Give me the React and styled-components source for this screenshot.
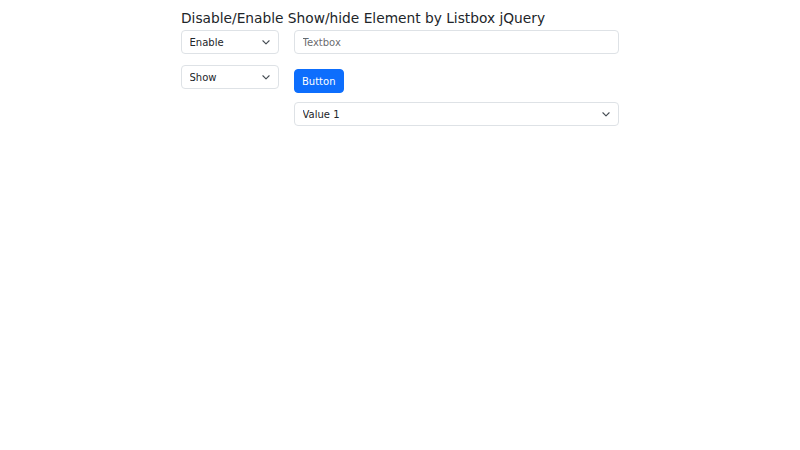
import React, { useState } from 'react';
import styled, { createGlobalStyle } from 'styled-components';

const GlobalStyle = createGlobalStyle`
  body {
    margin: 0;
    background: #fff;
    color: #212529;
    font-family: 'DejaVu Sans', sans-serif;
    font-size: 10px;
    line-height: 1.5;
  }
  * {
    box-sizing: border-box;
  }
`;

const Page = styled.div`
  width: 438px;
  margin: 0 auto;
  padding-top: 10px;
`;

const Title = styled.h4`
  margin: 0 0 3.5px;
  font-size: 13.75px;
  font-weight: 400;
  line-height: 16.5px;
`;

const Row = styled.div`
  display: grid;
  grid-template-columns: 98px 1fr;
  column-gap: 15px;
  align-items: start;
`;

const Column = styled.div`
  display: flex;
  flex-direction: column;
  align-items: flex-start;
  gap: ${(p) => p.$gap || 0}px;
`;

const SelectWrap = styled.div`
  position: relative;
  width: 100%;
  margin-top: ${(p) => p.$top || 0}px;
`;

const Select = styled.select`
  display: block;
  width: 100%;
  height: 24px;
  padding: 0 24px 0 7.5px;
  font: inherit;
  color: #212529;
  background: #fff;
  border: 1px solid #dee2e6;
  border-radius: 4px;
  appearance: none;
  outline: none;
`;

const Chevron = styled.svg`
  position: absolute;
  right: 8px;
  top: 50%;
  width: 10px;
  height: 7.5px;
  transform: translateY(-50%);
  pointer-events: none;
`;

const Input = styled.input`
  display: block;
  width: 100%;
  height: 24px;
  padding: 0 7.5px;
  font: inherit;
  color: #212529;
  background: #fff;
  border: 1px solid #dee2e6;
  border-radius: 4px;
  outline: none;
  visibility: ${(p) => (p.$hidden ? 'hidden' : 'visible')};
  &::placeholder {
    color: rgba(33, 37, 41, 0.7);
  }
  &:disabled {
    background: #e9ecef;
  }
`;

const Button = styled.button`
  height: 24px;
  margin-top: 15px;
  padding: 0 7px;
  font: inherit;
  color: #fff;
  background: #0d6efd;
  border: 1px solid #0d6efd;
  border-radius: 4px;
  visibility: ${(p) => (p.$hidden ? 'hidden' : 'visible')};
  &:disabled {
    opacity: 0.65;
  }
`;

function Dropdown({ value, onChange, options, top, disabled }) {
  return (
    <SelectWrap $top={top}>
      <Select value={value} onChange={(e) => onChange(e.target.value)} disabled={disabled}>
        {options.map((o) => (
          <option key={o} value={o}>
            {o}
          </option>
        ))}
      </Select>
      <Chevron viewBox="0 0 16 12">
        <path
          d="m3 4 5 5 5-5"
          fill="none"
          stroke="#495057"
          strokeWidth="1.8"
          strokeLinecap="round"
          strokeLinejoin="round"
        />
      </Chevron>
    </SelectWrap>
  );
}

export default function App() {
  const [mode, setMode] = useState('Enable');
  const [view, setView] = useState('Show');
  const [value, setValue] = useState('Value 1');

  const disabled = mode === 'Disable';
  const hidden = view === 'Hide';

  return (
    <Page>
      <GlobalStyle />
      <Title>Disable/Enable Show/hide Element by Listbox jQuery</Title>
      <Row>
        <Column $gap={11}>
          <Dropdown value={mode} onChange={setMode} options={['Enable', 'Disable']} />
          <Dropdown value={view} onChange={setView} options={['Show', 'Hide']} />
        </Column>
        <Column>
          <Input placeholder="Textbox" disabled={disabled} $hidden={hidden} />
          <Button disabled={disabled} $hidden={hidden}>
            Button
          </Button>
          <Dropdown
            top={9}
            value={value}
            onChange={setValue}
            options={['Value 1', 'Value 2', 'Value 3']}
            disabled={disabled}
          />
        </Column>
      </Row>
    </Page>
  );
}
